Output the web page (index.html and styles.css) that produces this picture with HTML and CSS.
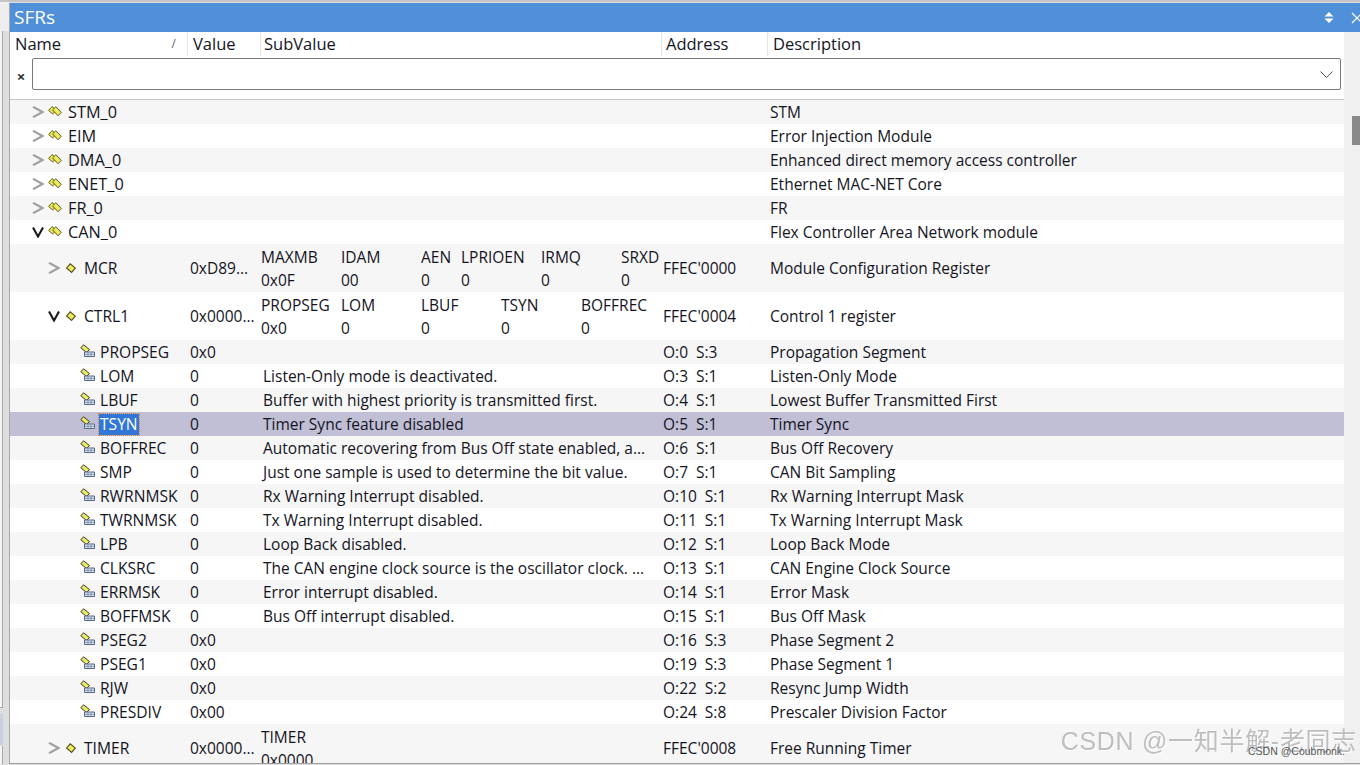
FILE: index.html
```html
<!DOCTYPE html>
<html>
<head>
<meta charset="utf-8">
<title>SFRs</title>
<link rel="stylesheet" href="styles.css">
</head>
<body>
<svg class="defs" width="0" height="0">
  <defs>
    <symbol id="ch-r" viewBox="0 0 12 12"><path d="M1 .8 L10.5 6 L1 11.2" fill="none" stroke="#a0a0a0" stroke-width="2.1"/></symbol>
    <symbol id="ch-d" viewBox="0 0 12 12"><path d="M1 1.5 L6 10.5 L11 1.5" fill="none" stroke="#1a1a1a" stroke-width="2.1"/></symbol>
    <symbol id="periph" viewBox="0 0 14 11">
      <path d="M.6 4.4 L4.2 .6 L8.2 4.2 L4.6 8 Z" fill="#ecE85f" stroke="#5f5b1a"/>
      <path d="M4.6 3.9 L7.8 .8 L13.4 6.3 L10 9.8 Z" fill="#ece85f" stroke="#5f5b1a"/>
    </symbol>
    <symbol id="reg" viewBox="0 0 10 10"><path d="M.6 5 L4.2 .8 L9.4 5.2 L5.6 9.4 Z" fill="#ece85f" stroke="#4f4c14" stroke-width="1.1"/></symbol>
    <symbol id="field" viewBox="0 0 15 13">
      <path d="M.8 3.8 L3.5 .8 L9.5 5.6 L6.5 8.4 Z" fill="#ecea70" stroke="#3f3c14"/>
      <path d="M4.5 8 H14.5 V12.5 H4.5 Z" fill="#dfe6f2" stroke="#55688a"/>
      <path d="M8 8.5 V12 M11 8.5 V12 M5 10.3 H14" stroke="#55688a" stroke-width=".6"/>
    </symbol>
  </defs>
</svg>
<div class="app">
  <aside class="side">
    <div class="side-top"></div>
    <div class="side-a"></div>
    <div class="side-b"></div>
    <div class="side-c"></div>
  </aside>
  <main class="panel">
    <header class="title">
      <span class="title-text">SFRs</span>
      <span class="title-btns">
        <svg class="updown" width="10" height="11" viewBox="0 0 10 11"><path d="M5 0 L9.5 4.5 H.5 Z M5 11 L.5 6.5 H9.5 Z" fill="#fff"/></svg>
        <svg class="close" width="12" height="12" viewBox="0 0 12 12"><path d="M1 1 L11 11 M11 1 L1 11" stroke="#fff" stroke-width="1.2"/></svg>
      </span>
    </header>
    <div class="body">
      <div class="content">
        <div class="head">
          <div class="hc c-name">Name<span class="sort">/</span></div>
          <div class="hc c-val">Value</div>
          <div class="hc c-sub">SubValue</div>
          <div class="hc c-addr">Address</div>
          <div class="hc c-desc">Description</div>
        </div>
        <div class="filter">
          <span class="clear">×</span>
          <div class="combo">
            <svg width="13" height="7" viewBox="0 0 13 7"><path d="M.5 .5 L6.5 6.5 L12.5 .5" fill="none" stroke="#555" stroke-width="1"/></svg>
          </div>
        </div>
        <div class="rows">
          <div class="row alt"><div class="c-name l1"><svg class="tw"><use href="#ch-r"/></svg><svg class="ic-p"><use href="#periph"/></svg><span>STM_0</span></div><div class="c-val"></div><div class="c-sub"></div><div class="c-addr"></div><div class="c-desc">STM</div></div>
          <div class="row"><div class="c-name l1"><svg class="tw"><use href="#ch-r"/></svg><svg class="ic-p"><use href="#periph"/></svg><span>EIM</span></div><div class="c-val"></div><div class="c-sub"></div><div class="c-addr"></div><div class="c-desc">Error Injection Module</div></div>
          <div class="row alt"><div class="c-name l1"><svg class="tw"><use href="#ch-r"/></svg><svg class="ic-p"><use href="#periph"/></svg><span>DMA_0</span></div><div class="c-val"></div><div class="c-sub"></div><div class="c-addr"></div><div class="c-desc">Enhanced direct memory access controller</div></div>
          <div class="row"><div class="c-name l1"><svg class="tw"><use href="#ch-r"/></svg><svg class="ic-p"><use href="#periph"/></svg><span>ENET_0</span></div><div class="c-val"></div><div class="c-sub"></div><div class="c-addr"></div><div class="c-desc">Ethernet MAC-NET Core</div></div>
          <div class="row alt"><div class="c-name l1"><svg class="tw"><use href="#ch-r"/></svg><svg class="ic-p"><use href="#periph"/></svg><span>FR_0</span></div><div class="c-val"></div><div class="c-sub"></div><div class="c-addr"></div><div class="c-desc">FR</div></div>
          <div class="row"><div class="c-name l1"><svg class="tw"><use href="#ch-d"/></svg><svg class="ic-p"><use href="#periph"/></svg><span>CAN_0</span></div><div class="c-val"></div><div class="c-sub"></div><div class="c-addr"></div><div class="c-desc">Flex Controller Area Network module</div></div>

          <div class="row alt tall"><div class="c-name l2"><svg class="tw"><use href="#ch-r"/></svg><svg class="ic-r"><use href="#reg"/></svg><span>MCR</span></div><div class="c-val">0xD89...</div>
            <div class="c-sub subs">
              <div class="sv w80"><b>MAXMB</b><b>0x0F</b></div><div class="sv w80"><b>IDAM</b><b>00</b></div><div class="sv w40"><b>AEN</b><b>0</b></div><div class="sv w80"><b>LPRIOEN</b><b>0</b></div><div class="sv w80"><b>IRMQ</b><b>0</b></div><div class="sv w39"><b>SRXD</b><b>0</b></div>
            </div>
            <div class="c-addr">FFEC'0000</div><div class="c-desc">Module Configuration Register</div></div>
          <div class="row tall"><div class="c-name l2"><svg class="tw"><use href="#ch-d"/></svg><svg class="ic-r"><use href="#reg"/></svg><span>CTRL1</span></div><div class="c-val">0x0000...</div>
            <div class="c-sub subs">
              <div class="sv w80"><b>PROPSEG</b><b>0x0</b></div><div class="sv w80"><b>LOM</b><b>0</b></div><div class="sv w80"><b>LBUF</b><b>0</b></div><div class="sv w80"><b>TSYN</b><b>0</b></div><div class="sv w79"><b>BOFFREC</b><b>0</b></div>
            </div>
            <div class="c-addr">FFEC'0004</div><div class="c-desc">Control 1 register</div></div>

          <div class="row alt"><div class="c-name l3"><svg class="ic-f"><use href="#field"/></svg><span>PROPSEG</span></div><div class="c-val">0x0</div><div class="c-sub"></div><div class="c-addr off"><i>O:0</i>S:3</div><div class="c-desc">Propagation Segment</div></div>
          <div class="row"><div class="c-name l3"><svg class="ic-f"><use href="#field"/></svg><span>LOM</span></div><div class="c-val">0</div><div class="c-sub">Listen-Only mode is deactivated.</div><div class="c-addr off"><i>O:3</i>S:1</div><div class="c-desc">Listen-Only Mode</div></div>
          <div class="row alt"><div class="c-name l3"><svg class="ic-f"><use href="#field"/></svg><span>LBUF</span></div><div class="c-val">0</div><div class="c-sub">Buffer with highest priority is transmitted first.</div><div class="c-addr off"><i>O:4</i>S:1</div><div class="c-desc">Lowest Buffer Transmitted First</div></div>
          <div class="row sel"><div class="c-name l3"><svg class="ic-f"><use href="#field"/></svg><span class="cur">TSYN</span></div><div class="c-val">0</div><div class="c-sub">Timer Sync feature disabled</div><div class="c-addr off"><i>O:5</i>S:1</div><div class="c-desc">Timer Sync</div></div>
          <div class="row alt"><div class="c-name l3"><svg class="ic-f"><use href="#field"/></svg><span>BOFFREC</span></div><div class="c-val">0</div><div class="c-sub">Automatic recovering from Bus Off state enabled, a...</div><div class="c-addr off"><i>O:6</i>S:1</div><div class="c-desc">Bus Off Recovery</div></div>
          <div class="row"><div class="c-name l3"><svg class="ic-f"><use href="#field"/></svg><span>SMP</span></div><div class="c-val">0</div><div class="c-sub">Just one sample is used to determine the bit value.</div><div class="c-addr off"><i>O:7</i>S:1</div><div class="c-desc">CAN Bit Sampling</div></div>
          <div class="row alt"><div class="c-name l3"><svg class="ic-f"><use href="#field"/></svg><span>RWRNMSK</span></div><div class="c-val">0</div><div class="c-sub">Rx Warning Interrupt disabled.</div><div class="c-addr off"><i>O:10</i>S:1</div><div class="c-desc">Rx Warning Interrupt Mask</div></div>
          <div class="row"><div class="c-name l3"><svg class="ic-f"><use href="#field"/></svg><span>TWRNMSK</span></div><div class="c-val">0</div><div class="c-sub">Tx Warning Interrupt disabled.</div><div class="c-addr off"><i>O:11</i>S:1</div><div class="c-desc">Tx Warning Interrupt Mask</div></div>
          <div class="row alt"><div class="c-name l3"><svg class="ic-f"><use href="#field"/></svg><span>LPB</span></div><div class="c-val">0</div><div class="c-sub">Loop Back disabled.</div><div class="c-addr off"><i>O:12</i>S:1</div><div class="c-desc">Loop Back Mode</div></div>
          <div class="row"><div class="c-name l3"><svg class="ic-f"><use href="#field"/></svg><span>CLKSRC</span></div><div class="c-val">0</div><div class="c-sub">The CAN engine clock source is the oscillator clock. ...</div><div class="c-addr off"><i>O:13</i>S:1</div><div class="c-desc">CAN Engine Clock Source</div></div>
          <div class="row alt"><div class="c-name l3"><svg class="ic-f"><use href="#field"/></svg><span>ERRMSK</span></div><div class="c-val">0</div><div class="c-sub">Error interrupt disabled.</div><div class="c-addr off"><i>O:14</i>S:1</div><div class="c-desc">Error Mask</div></div>
          <div class="row"><div class="c-name l3"><svg class="ic-f"><use href="#field"/></svg><span>BOFFMSK</span></div><div class="c-val">0</div><div class="c-sub">Bus Off interrupt disabled.</div><div class="c-addr off"><i>O:15</i>S:1</div><div class="c-desc">Bus Off Mask</div></div>
          <div class="row alt"><div class="c-name l3"><svg class="ic-f"><use href="#field"/></svg><span>PSEG2</span></div><div class="c-val">0x0</div><div class="c-sub"></div><div class="c-addr off"><i>O:16</i>S:3</div><div class="c-desc">Phase Segment 2</div></div>
          <div class="row"><div class="c-name l3"><svg class="ic-f"><use href="#field"/></svg><span>PSEG1</span></div><div class="c-val">0x0</div><div class="c-sub"></div><div class="c-addr off"><i>O:19</i>S:3</div><div class="c-desc">Phase Segment 1</div></div>
          <div class="row alt"><div class="c-name l3"><svg class="ic-f"><use href="#field"/></svg><span>RJW</span></div><div class="c-val">0x0</div><div class="c-sub"></div><div class="c-addr off"><i>O:22</i>S:2</div><div class="c-desc">Resync Jump Width</div></div>
          <div class="row"><div class="c-name l3"><svg class="ic-f"><use href="#field"/></svg><span>PRESDIV</span></div><div class="c-val">0x00</div><div class="c-sub"></div><div class="c-addr off"><i>O:24</i>S:8</div><div class="c-desc">Prescaler Division Factor</div></div>

          <div class="row alt tall"><div class="c-name l2"><svg class="tw"><use href="#ch-r"/></svg><svg class="ic-r"><use href="#reg"/></svg><span>TIMER</span></div><div class="c-val">0x0000...</div>
            <div class="c-sub subs"><div class="sv w80"><b>TIMER</b><b>0x0000</b></div></div>
            <div class="c-addr">FFEC'0008</div><div class="c-desc">Free Running Timer</div></div>
        </div>
      </div>
      <div class="vscroll"><div class="thumb"></div></div>
    </div>
    <div class="watermark">CSDN @一知半解-老同志</div>
    <div class="wm2">CSDN @Coubmonk.</div>
  </main>
</div>
</body>
</html>
```

FILE: styles.css
```css
* { box-sizing: border-box; }
html, body { margin: 0; height: 765px; overflow: hidden; }
body {
  background: #dedede;
  font-family: "Open Sans", "Noto Sans", sans-serif;
  font-size: 15.5px;
  color: #14141e;
}
.defs { position: absolute; }
.app { display: flex; height: 765px; padding: 1px 0 1px; border-top: 2px solid #c4c4c4; }
.side { width: 9px; flex: none; display: flex; flex-direction: column; margin-top: -1px; padding-right: 6px; }
.side-top { height: 29px; flex: none; margin-right: -6px; background: #eeeeee; }
.side-a { height: 677px; flex: none; background: #f4f4f4; border-right: 1px solid #a8a8a8; border-bottom: 1px solid #a8a8a8; }
.side-b { height: 31px; flex: none; margin-top: 6px; background: #c9cee0; }
.side-c { flex: 1; margin-top: 1px; background: #f4f4f4; border-right: 1px solid #a8a8a8; }
.panel { position: relative; flex: 1; display: flex; flex-direction: column; min-width: 0; border-left: 1px solid #a8a8a8; border-bottom: 1px solid #a0a0a0; }
.title { height: 29px; flex: none; background: #5090d8; color: #fff; display: flex; align-items: center; justify-content: space-between; padding-left: 4px; font-size: 19px; line-height: 29px; }
.title-btns { display: flex; align-items: center; gap: 17px; margin-right: -3px; }
.body { flex: 1; display: flex; min-height: 0; }
.content { width: 1334px; flex: none; background: #fff; display: flex; flex-direction: column; min-height: 0; }
.head { height: 24px; display: flex; flex: none; align-items: stretch; background: #fff; font-size: 16.5px; }
.hc { border-right: 1px solid #e4e4e4; line-height: 24px; position: relative; white-space: nowrap; }
.hc.c-name { display: block; width: 178px; padding-left: 5px; font-size: 16.5px; }
.hc.c-val { width: 73px; padding-left: 5px; overflow: visible; }
.hc.c-sub { width: 401px; padding-left: 3px; }
.hc.c-addr { width: 106px; padding-left: 4px; }
.hc.c-desc { padding-left: 5px; border-right: 0; }
.sort { position: absolute; right: 11px; top: 0; color: #666; font-size: 12px; }
.filter { height: 44px; flex: none; display: flex; align-items: center; padding: 2px 3px 9px 0; border-bottom: 1px solid #c4c4c4; }
.clear { width: 22px; text-align: center; font-size: 15px; font-weight: 700; color: #333; padding-top: 4px; }
.combo { flex: 1; height: 32px; border: 1px solid #7a7a7a; border-radius: 2px; display: flex; align-items: center; justify-content: flex-end; padding-right: 7px; }
.rows { flex: 1; min-height: 0; overflow: hidden; }
.row { display: flex; height: 24px; align-items: center; background: #fff; }
.row.alt { background: #f6f6f6; }
.row.tall { height: 48px; }
.row.sel { background: #c1bfd6; }
.c-name { width: 177px; flex: none; display: flex; align-items: center; white-space: nowrap; font-size: 15.6px; }
.c-val { width: 73px; flex: none; white-space: nowrap; overflow: hidden; padding-left: 3px; }
.c-sub { width: 400px; flex: none; white-space: nowrap; overflow: hidden; padding-left: 3px; }
.c-addr { width: 107px; flex: none; padding-left: 3px; white-space: nowrap; }
.c-desc { flex: 1; padding-left: 3px; white-space: nowrap; }
.off i { font-style: normal; margin-right: 8px; }
.l1 { padding-left: 22px; font-size: 16.3px; }
.l2 { padding-left: 38px; }
.l3 { padding-left: 70px; }
.tw { width: 12px; height: 12px; flex: none; }
.ic-p { width: 14px; height: 11px; flex: none; margin-left: 4px; margin-right: 6px; margin-top: -1px; }
.ic-r { width: 10px; height: 10px; flex: none; margin-left: 6px; margin-right: 8px; margin-top: -1px; }
.ic-f { width: 15px; height: 13px; flex: none; margin-right: 5px; margin-top: -4px; }
.cur { background: #3377d6; color: #fff; outline: 1px dotted #d08030; margin-left: -1px; padding: 0 1px; line-height: 21px; }
.subs { display: flex; padding-left: 1px; }
.sv { flex: none; display: flex; flex-direction: column; line-height: 23px; height: 48px; padding-top: 2px; overflow: hidden; }
.sv b { font-weight: 400; }
.w80 { width: 80px; }
.w79 { width: 79px; }
.w40 { width: 40px; }
.w39 { width: 39px; }
.vscroll { flex: 1; background: #f0f0f0; padding-top: 84px; padding-left: 8px; }
.thumb { height: 29px; background: #8a8a8a; }
.watermark { position: absolute; right: 3px; bottom: 6px; font-size: 25px; color: rgba(150,150,150,.6); letter-spacing: .7px; font-family: "Liberation Sans", "Noto Sans CJK SC", sans-serif; white-space: nowrap; text-shadow: 1px 1px 0 rgba(255,255,255,.8); filter: blur(.4px); }
.wm2 { position: absolute; right: 15px; bottom: 6px; font-size: 10.5px; color: #555; font-family: "Liberation Sans", sans-serif; white-space: nowrap; }
```
